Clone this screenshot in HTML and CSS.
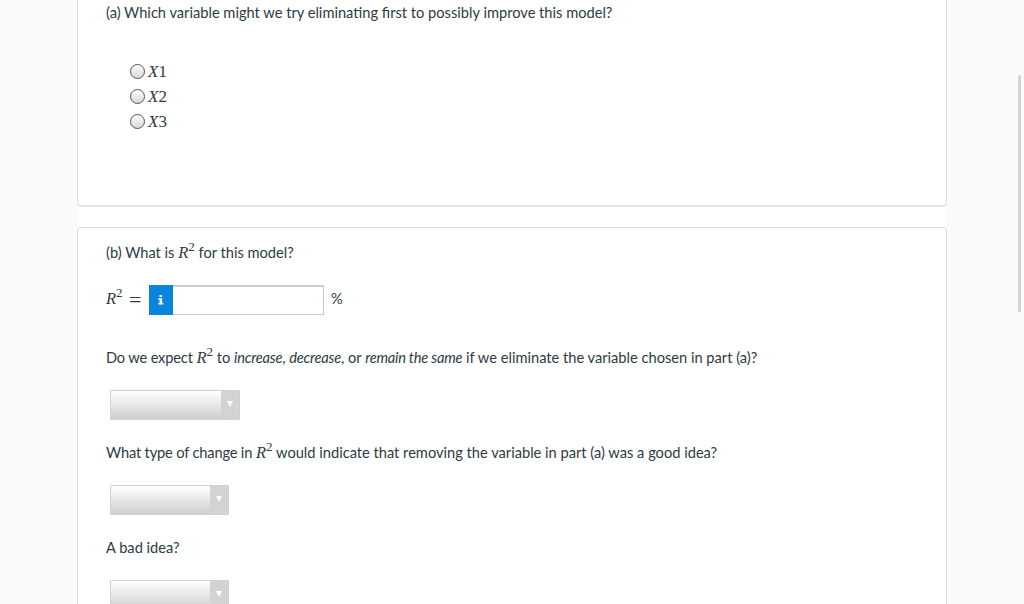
FILE: index.html
```
<!DOCTYPE html>
<html lang="en">
<head>
    <meta charset="UTF-8">
    <meta name="viewport" content="width=device-width, initial-scale=1.0">
    <title>Question</title>
    <link rel="stylesheet" href="styles.css">
</head>
<body>
    <div class="container">
        <div class="card card-a">
            <p class="text">(a) Which variable might we try eliminating first to possibly improve this model?</p>
            <div class="options">
                <label class="option"><input type="radio" name="variable"><span class="math"><i>X</i>1</span></label>
                <label class="option"><input type="radio" name="variable"><span class="math"><i>X</i>2</span></label>
                <label class="option"><input type="radio" name="variable"><span class="math"><i>X</i>3</span></label>
            </div>
        </div>
        <div class="card card-b">
            <p class="text">(b) What is <span class="math"><i>R</i><sup>2</sup></span> for this model?</p>
            <div class="answer">
                <span class="math"><i>R</i><sup>2</sup></span>
                <span class="equals">=</span>
                <span class="info">
                    <svg width="6" height="10" viewBox="0 0 6 10"><path d="M1.5 0h2.6v2H1.5zM.3 3.2h3.8v4.6h1.2V9.4H.3V7.8h1.3v-3H.3z" fill="#fff"/></svg>
                </span>
                <input type="text" class="answer-input">
                <span class="unit">%</span>
            </div>
            <p class="text"><span class="tight">Do we expect</span> <span class="math"><i>R</i><sup>2</sup></span> to <em>increase</em>, <em>decrease</em>, or <em>remain the same</em> if we eliminate the variable chosen in part (a)?</p>
            <div class="select select-wide"><span class="arrow"></span></div>
            <p class="text"><span class="tight">What type of change in</span> <span class="math"><i>R</i><sup>2</sup></span> would indicate that removing the variable in part (a) was a good idea?</p>
            <div class="select"><span class="arrow"></span></div>
            <p class="text">A bad idea?</p>
            <div class="select"><span class="arrow"></span></div>
        </div>
    </div>
    <div class="scroll-thumb"></div>
</body>
</html>
```
FILE: styles.css
```
* {
    box-sizing: border-box;
}
body {
    margin: 0;
    height: 604px;
    overflow: hidden;
    background-color: #fafafa;
    font-family: Lato, sans-serif;
    font-size: 14.65px;
    color: #2d3b45;
}
.container {
    width: 870px;
    margin-left: 77px;
    background: #fff;
}
.card {
    border: 1px solid #e0e0e0;
    border-radius: 4px;
    padding: 0 28px;
    background: #fff;
}
.card-a {
    height: 207px;
    padding-top: 1px;
    border-top: none;
    border-bottom: 2px solid #e6e6e6;
    border-radius: 0 0 4px 4px;
}
.card-b {
    height: 377px;
    margin-top: 20px;
    padding-top: 13px;
    border-bottom: none;
    border-radius: 4px 4px 0 0;
    overflow: hidden;
}
.text {
    margin: 0;
    height: 24px;
    line-height: 23px;
    white-space: nowrap;
}
.text em {
    letter-spacing: -0.22px;
}
.tight {
    letter-spacing: -0.17px;
}
.math {
    font-family: "Liberation Serif", serif;
    font-size: 16.5px;
    line-height: 0;
}
.math sup {
    font-size: 13px;
    line-height: 0;
    vertical-align: 7px;
}
.options {
    margin: 34px 0 0 25px;
}
.option {
    display: flex;
    align-items: center;
    height: 25px;
}
.option .math {
    font-size: 17px;
}
.option input {
    appearance: none;
    width: 15px;
    height: 15px;
    margin: 0 3px 0 -1px;
    border: 1px solid #555;
    border-radius: 50%;
    background: linear-gradient(#fcfcfc, #d8d8d8);
}
.answer {
    display: flex;
    align-items: center;
    height: 30px;
    margin: 20px 0 31px;
}
.answer > .math {
    width: 17px;
    line-height: 16px;
    padding-bottom: 2px;
}
.equals {
    width: 13px;
    margin: 0 7px 0 6px;
    font-family: "Liberation Serif", serif;
    font-size: 22px;
    line-height: 22px;
    padding-bottom: 1px;
}
.info {
    display: flex;
    align-items: center;
    justify-content: center;
    width: 24px;
    height: 30px;
    background: #0a85de;
}
.answer-input {
    width: 151px;
    height: 30px;
    padding: 0 6px;
    border: 1px solid #c8c8c8;
    border-left: none;
    border-top: 2px solid #ccc;
}
.unit {
    margin-left: 7px;
    padding-bottom: 3px;
}
.select {
    display: flex;
    justify-content: flex-end;
    width: 119px;
    height: 30px;
    margin: 20px 0 21px 4px;
    border: 1px solid #d0d0d0;
    border-radius: 1px;
    background: linear-gradient(#fff, #cfcfcf);
}
.select-wide {
    width: 130px;
}
.arrow {
    display: flex;
    justify-content: center;
    width: 18px;
    background: #d3d3d3;
}
.arrow::before {
    content: "";
    width: 0;
    height: 0;
    margin-top: 10px;
    border: 3px solid transparent;
    border-top: 6px solid #fff;
    border-bottom: none;
}
.scroll-thumb {
    position: absolute;
    left: 1018px;
    top: 75px;
    width: 3px;
    height: 237px;
    border-radius: 2px;
    background: #d2d2d2;
}
```
